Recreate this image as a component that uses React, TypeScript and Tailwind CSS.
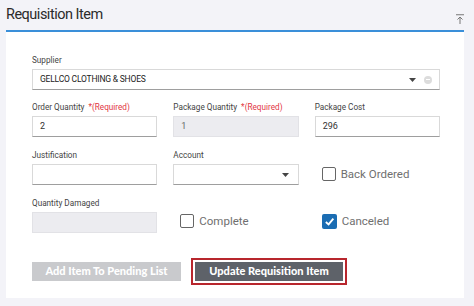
import { FC } from "react";

const inputBase =
  "h-[21px] w-full border border-[#d9d9d9] border-b-[#9e9e9e] px-[7px] flex items-center text-[9px] text-[#333]";

const Label: FC<{ text: string; required?: boolean }> = ({ text, required }) => (
  <div className="h-[12px] leading-[12px] mb-[3px] text-[8.2px] text-[#444] whitespace-nowrap">
    {text}
    {required && <span className="ml-[4px] text-[#e2363f]">*(Required)</span>}
  </div>
);

const Caret: FC = () => (
  <svg width="7" height="4" viewBox="0 0 7 4" className="shrink-0">
    <path d="M0 0 L7 0 L3.5 4 Z" fill="#444" />
  </svg>
);

const Checkbox: FC<{ label: string; checked?: boolean }> = ({ label, checked }) => (
  <div className="flex items-center gap-[5px] text-[11.5px] text-[#6f6f6f]">
    {checked ? (
      <span className="w-[15px] h-[15px] rounded-[2px] bg-[#1b6db3] flex items-center justify-center">
        <svg width="11" height="11" viewBox="0 0 12 12">
          <path d="M2 6.5 L5 9.2 L10.2 2.8" fill="none" stroke="#fff" strokeWidth="2" />
        </svg>
      </span>
    ) : (
      <span className="w-[14px] h-[14px] rounded-[2px] border-[1.5px] border-[#666]" />
    )}
    <span>{label}</span>
  </div>
);

const App: FC = () => {
  return (
    <div
      className="w-[474px] h-[306px] overflow-hidden bg-[#f3f3f8]"
      style={{ fontFamily: "Roboto, 'Liberation Sans', sans-serif" }}
    >
      <header className="h-[30px] flex items-center justify-between pl-[6px] pr-[10px]">
        <h1 className="text-[14.5px] tracking-[-0.5px] text-[#2b2b2b] leading-none">Requisition Item</h1>
        <svg width="8" height="10" viewBox="0 0 8 10" className="mt-[8px]">
          <path d="M0 0.75 H8 M4 3 V10 M1.5 5.5 L4 3 L6.5 5.5" fill="none" stroke="#777" strokeWidth="1" />
        </svg>
      </header>

      <section className="ml-[6px] w-[458px] bg-white border-t-2 border-[#3a8fd9] pt-[22px] pl-[26px] pr-[24px] pb-[17px]">
        <Label text="Supplier" />
        <div className={`${inputBase} justify-between w-[408px]`}>
          <span className="uppercase text-[8.5px] tracking-[-0.2px] text-[#222]">GELLCO CLOTHING &amp; SHOES</span>
          <div className="flex items-center gap-[8px]">
            <Caret />
            <span className="w-[8px] h-[8px] rounded-full bg-[#dcdcdc] flex items-center justify-center">
              <span className="w-[4px] h-[1px] bg-white" />
            </span>
          </div>
        </div>

        <div className="grid grid-cols-3 gap-x-[16px] gap-y-[12px] mt-[11px] w-[408px]">
          <div>
            <Label text="Order Quantity" required />
            <div className={inputBase}>2</div>
          </div>
          <div>
            <Label text="Package Quantity" required />
            <div className={`${inputBase} bg-[#ececf0] text-[#666] border-[#e2e2e6] border-b-[#e2e2e6]`}>1</div>
          </div>
          <div>
            <Label text="Package Cost" />
            <div className={inputBase}>296</div>
          </div>

          <div>
            <Label text="Justification" />
            <div className={inputBase} />
          </div>
          <div>
            <Label text="Account" />
            <div className={`${inputBase} justify-end pr-[9px]`}>
              <Caret />
            </div>
          </div>
          <div className="flex items-end pb-[2px] pl-[7px]">
            <Checkbox label="Back Ordered" />
          </div>

          <div>
            <Label text="Quantity Damaged" />
            <div className={`${inputBase} bg-[#ececf0] border-[#e2e2e6] border-b-[#e2e2e6]`} />
          </div>
          <div className="flex items-end pb-[3px] pl-[7px]">
            <Checkbox label="Complete" />
          </div>
          <div className="flex items-end pb-[3px] pl-[7px]">
            <Checkbox label="Canceled" checked />
          </div>
        </div>

        <div
          className="flex items-center gap-[14px] mt-[29px]"
          style={{ fontFamily: "Lato, 'Open Sans', sans-serif" }}
        >
          <button className="w-[149px] h-[19px] bg-[#c9cacd] text-white font-black text-[11px]">
            Add Item To Pending List
          </button>
          <button className="w-[148px] h-[19px] bg-[#5e6269] text-white font-black text-[11px] outline-2 outline-offset-2 outline-[#b8262d]">
            Update Requisition Item
          </button>
        </div>
      </section>
    </div>
  );
};

export default App;
